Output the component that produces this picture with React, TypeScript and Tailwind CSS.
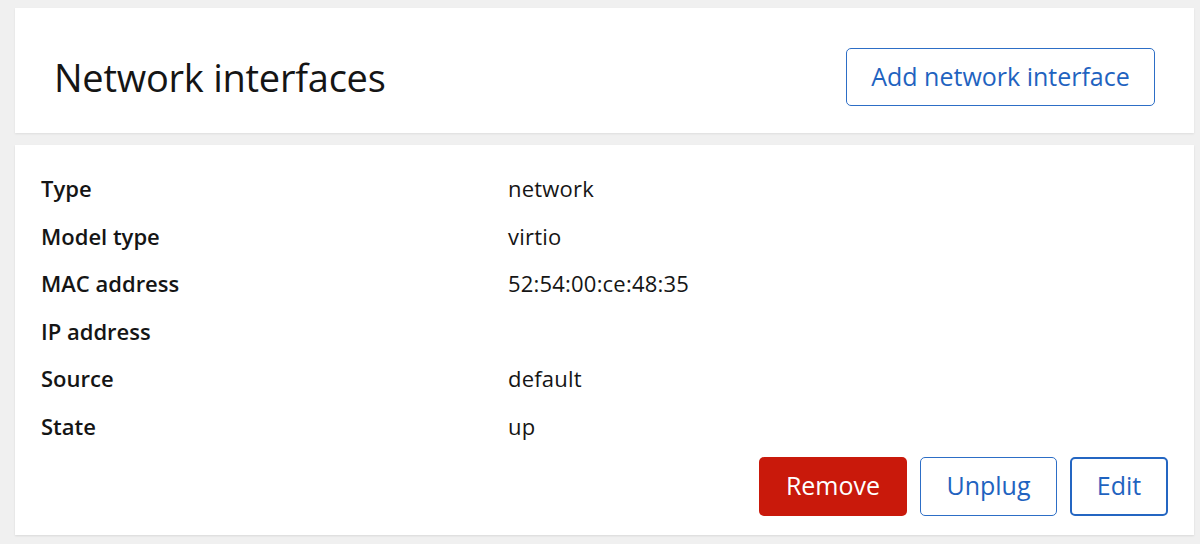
import React from "react";

type Row = {
  label: string;
  value: string;
};

const ROWS: Row[] = [
  { label: "Type", value: "network" },
  { label: "Model type", value: "virtio" },
  { label: "MAC address", value: "52:54:00:ce:48:35" },
  { label: "IP address", value: "" },
  { label: "Source", value: "default" },
  { label: "State", value: "up" },
];

const App = () => {
  return (
    <div
      className="h-[544px] w-[1200px] overflow-hidden bg-[#f0f0f0] pt-[8px] pl-[15px] pr-[6px] text-[#151515]"
      style={{ fontFamily: '"Open Sans", "Noto Sans", sans-serif' }}
    >
      {/* Заголовок карточки */}
      <div className="flex h-[125px] items-start justify-between bg-white px-[39px] pt-[40px] shadow-[0_1px_2px_rgba(0,0,0,0.08)]">
        <h1 className="mt-[7px] text-[38px] leading-[44px] font-normal tracking-[-0.25px]">
          Network interfaces
        </h1>
        <button className="h-[58px] w-[309px] rounded-[5px] border-[1.5px] border-[#2d6ec6] bg-white text-[25px] text-[#1f63c0]">
          Add network interface
        </button>
      </div>

      {/* Детали интерфейса */}
      <div className="mt-[12px] h-[390px] bg-white px-[26px] pt-[27px] shadow-[0_1px_2px_rgba(0,0,0,0.1)]">
        <div className="grid grid-cols-[467px_1fr]">
          {ROWS.map((row) => (
            <React.Fragment key={row.label}>
              <div className="h-[47.6px] text-[22px] leading-[32px] font-semibold">
                {row.label}
              </div>
              <div className="h-[47.6px] text-[22px] leading-[32px] tracking-[0.2px]">
                {row.value}
              </div>
            </React.Fragment>
          ))}
        </div>
        <div className="-mt-[1px] flex justify-end gap-[13px]">
          <button className="h-[59px] w-[148px] rounded-[5px] bg-[#c9190b] text-[25px] text-white">
            Remove
          </button>
          <button className="h-[59px] w-[137px] rounded-[5px] border-[1.5px] border-[#2d6ec6] bg-white text-[25px] text-[#1f63c0]">
            Unplug
          </button>
          <button className="h-[59px] w-[98px] rounded-[5px] border-[2.5px] border-[#2466c2] bg-white text-[25px] text-[#1f63c0]">
            Edit
          </button>
        </div>
      </div>
    </div>
  );
};

export default App;
